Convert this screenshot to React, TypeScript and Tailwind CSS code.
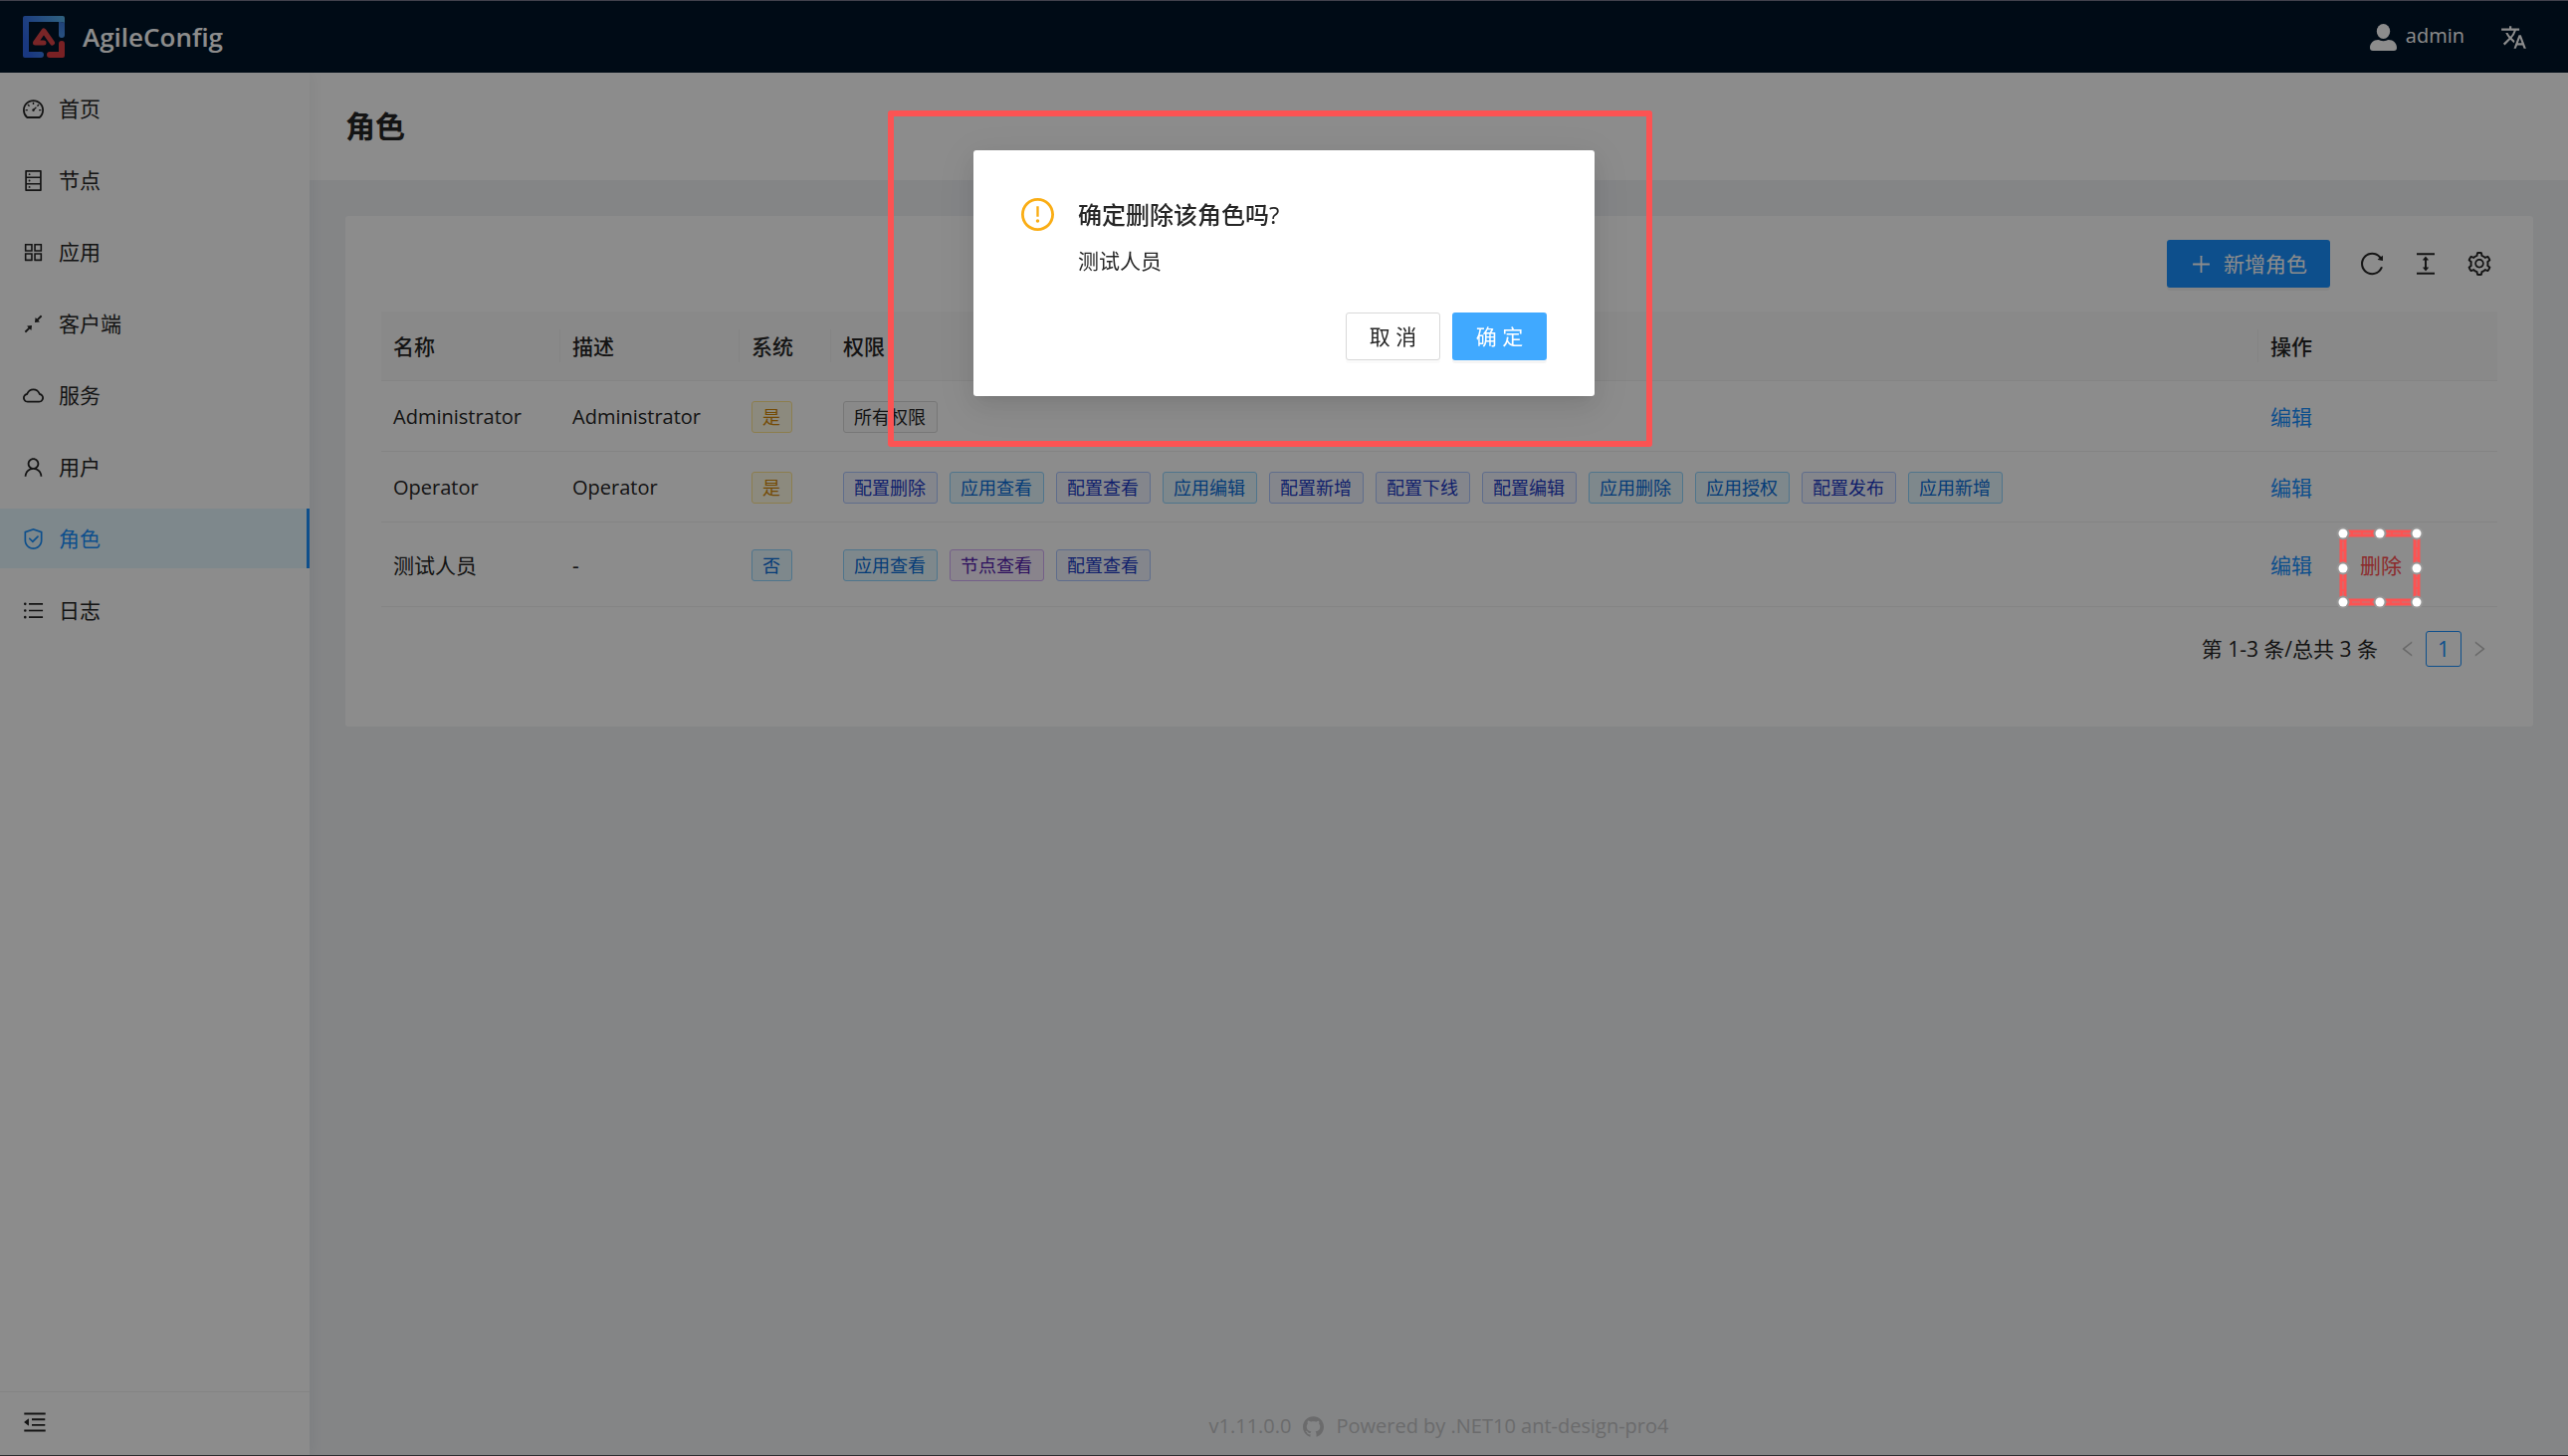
import React from 'react';
import {
  AiFillGithub,
  AiOutlineAppstore,
  AiOutlineCloud,
  AiOutlineColumnHeight,
  AiOutlineDashboard,
  AiOutlineDatabase,
  AiOutlineExclamationCircle,
  AiOutlineLeft,
  AiOutlineMenuFold,
  AiOutlinePlus,
  AiOutlineReload,
  AiOutlineRight,
  AiOutlineSafety,
  AiOutlineSetting,
  AiOutlineShrink,
  AiOutlineUnorderedList,
  AiOutlineUser,
} from 'react-icons/ai';
import { MdTranslate } from 'react-icons/md';
import type { IconType } from 'react-icons';

type TagColor = 'default' | 'gold' | 'blue' | 'geekblue' | 'purple';

interface Role {
  name: string;
  description: string;
  system: boolean;
  functions: string[];
}

// antd crops its glyphs to this box
const antBox = '64 64 896 896';

const tagStyles: Record<TagColor, string> = {
  default: 'bg-[#fafafa] border-[#d9d9d9] text-[#262626]',
  gold: 'bg-[#fffbe6] border-[#ffe58f] text-[#d48806]',
  blue: 'bg-[#e6f7ff] border-[#91d5ff] text-[#096dd9]',
  geekblue: 'bg-[#f0f5ff] border-[#adc6ff] text-[#1d39c4]',
  purple: 'bg-[#f9f0ff] border-[#d3adf7] text-[#531dab]',
};

const menus: { label: string; icon: IconType }[] = [
  { label: '首页', icon: AiOutlineDashboard },
  { label: '节点', icon: AiOutlineDatabase },
  { label: '应用', icon: AiOutlineAppstore },
  { label: '客户端', icon: AiOutlineShrink },
  { label: '服务', icon: AiOutlineCloud },
  { label: '用户', icon: AiOutlineUser },
  { label: '角色', icon: AiOutlineSafety },
  { label: '日志', icon: AiOutlineUnorderedList },
];

const roles: Role[] = [
  { name: 'Administrator', description: 'Administrator', system: true, functions: ['所有权限'] },
  {
    name: 'Operator',
    description: 'Operator',
    system: true,
    functions: [
      '配置删除', '应用查看', '配置查看', '应用编辑', '配置新增', '配置下线',
      '配置编辑', '应用删除', '应用授权', '配置发布', '应用新增',
    ],
  },
  { name: '测试人员', description: '-', system: false, functions: ['应用查看', '节点查看', '配置查看'] },
];

const functionColor = (name: string): TagColor => {
  if (name.startsWith('配置')) return 'geekblue';
  if (name.startsWith('应用')) return 'blue';
  if (name.startsWith('节点')) return 'purple';
  return 'default';
};

function Tag({ color, children }: { color: TagColor; children: React.ReactNode }) {
  return (
    <span className={`inline-block h-8 rounded-[3px] border pl-[10px] pr-[11px] text-lg leading-[30px] whitespace-nowrap ${tagStyles[color]}`}>
      {children}
    </span>
  );
}

function Logo() {
  return (
    <svg width="42" height="42" viewBox="0 0 42 42" fill="none" aria-hidden="true">
      <defs>
        <linearGradient id="logo-blue" x1="0" y1="21" x2="42" y2="6" gradientUnits="userSpaceOnUse">
          <stop stopColor="#2f66ea" />
          <stop offset="1" stopColor="#56b0e8" />
        </linearGradient>
        <linearGradient id="logo-side" x1="39" y1="6" x2="39" y2="22" gradientUnits="userSpaceOnUse">
          <stop stopColor="#3a78dc" />
          <stop offset="1" stopColor="#4a94e8" />
        </linearGradient>
      </defs>
      <path d="M2 0h38a2 2 0 0 1 2 2v5l-4-1H6v30h12a3 3 0 0 1 0 6H2a2 2 0 0 1-2-2V2a2 2 0 0 1 2-2Z" fill="url(#logo-blue)" />
      <path d="M36 6h2l4 1v12a3 3 0 0 1-6 0Z" fill="url(#logo-side)" />
      <path d="M39 25a3 3 0 0 1 3 3v12a2 2 0 0 1-2 2H27a3 3 0 0 1 0-6h9v-8a3 3 0 0 1 3-3Z" fill="#dc3c42" />
      <path d="M21 27h-8.500L21 15l8.500 12" stroke="#dc4448" strokeWidth="5" strokeLinecap="round" strokeLinejoin="round" />
    </svg>
  );
}

function Header() {
  return (
    <header className="flex h-[72px] shrink-0 items-center justify-between bg-[#001529] pr-[41px] pl-[23px] text-white">
      <a href="#" className="flex items-center gap-[18px]">
        <Logo />
        <h1 className="text-[26px] font-semibold">AgileConfig</h1>
      </a>
      <div className="flex items-center gap-9">
        <button className="flex items-center gap-[9px]">
          <svg width="27" height="27" viewBox="0 0 27 27" fill="currentColor" aria-hidden="true">
            <ellipse cx="13.500" cy="7.500" rx="6.700" ry="7.500" />
            <path d="M0 24c0-4.500 3.500-8 8.300-8 1.600 0 2.800 1.300 5.200 1.300s3.600-1.300 5.200-1.300C23.500 16 27 19.500 27 24c0 2-1 3-3 3H3c-2 0-3-1-3-3Z" />
          </svg>
          <span className="pb-0.5 text-xl">admin</span>
        </button>
        <button aria-label="语言">
          <MdTranslate size={27} />
        </button>
      </div>
    </header>
  );
}

function Sidebar() {
  return (
    <aside className="z-10 flex w-[311px] shrink-0 flex-col bg-white shadow-[3px_0_12px_rgba(29,35,41,0.05)]">
      <nav className="flex grow flex-col gap-3 pt-[6px]">
        {menus.map(({ label, icon: Icon }) => (
          <a
            key={label}
            href="#"
            className={
              label === '角色'
                ? 'flex h-[60px] items-center gap-[15px] border-r-3 border-[#1890ff] bg-[#e6f7ff] pl-[23px] text-[#1890ff]'
                : 'flex h-[60px] items-center gap-[15px] pl-[23px]'
            }
          >
            <Icon size={21} viewBox={antBox} />
            {label}
          </a>
        ))}
      </nav>
      <div className="h-16 border-t border-[#f0f0f0] pt-[17px] pl-[23px]">
        <button aria-label="收起菜单">
          <AiOutlineMenuFold size={24} viewBox={antBox} />
        </button>
      </div>
    </aside>
  );
}

function RoleTable() {
  const cell = 'border-b border-[#f0f0f0] pt-0.5 pl-3';

  return (
    <table className="w-full table-fixed border-separate border-spacing-0 text-left">
      <colgroup>
        <col className="w-[180px]" />
        <col className="w-[180px]" />
        <col className="w-[92px]" />
        <col />
        <col className="w-[240px]" />
      </colgroup>
      <thead>
        <tr className="h-[70px]">
          {['名称', '描述', '系统', '权限', '操作'].map((title) => (
            <th key={title} className="group border-b border-[#f0f0f0] bg-[#fafafa] p-0 font-medium">
              <div className="h-[33px] border-r border-[#f0f0f0] pl-3 group-last:border-r-0">{title}</div>
            </th>
          ))}
        </tr>
      </thead>
      <tbody>
        {roles.map((role) => (
          <tr key={role.name} className={role.system ? 'h-[71px] text-xl leading-[34px]' : 'h-[85px]'}>
            <td className={cell}>{role.name}</td>
            <td className={cell}>{role.description}</td>
            <td className={cell}>
              <div className="flex">
                <Tag color={role.system ? 'gold' : 'blue'}>{role.system ? '是' : '否'}</Tag>
              </div>
            </td>
            <td className={cell}>
              <div className="flex gap-3">
                {role.functions.map((name) => (
                  <Tag key={name} color={functionColor(name)}>{name}</Tag>
                ))}
              </div>
            </td>
            <td className={cell}>
              <div className="flex gap-12 text-[21px]">
                <a href="#" className="text-[#1890ff]">编辑</a>
                {!role.system && <a href="#" className="text-[#ff4d4f]">删除</a>}
              </div>
            </td>
          </tr>
        ))}
      </tbody>
    </table>
  );
}

// Selection box with drag handles around the delete link
function SelectionMark() {
  const points = [
    [7, 7], [44, 7], [81, 7],
    [7, 42], [81, 42],
    [7, 76], [44, 76], [81, 76],
  ];
  return (
    <svg className="absolute top-[528px] right-[145px] z-30" width="88" height="84" viewBox="0 0 88 84" fill="none" aria-hidden="true">
      <rect x="7" y="7" width="74" height="69" stroke="#fc5353" strokeWidth="7" />
      <rect x="7" y="7" width="74" height="69" stroke="#c27878" strokeWidth="1" strokeDasharray="8 2" />
      {points.map(([x, y]) => (
        <g key={`${x}-${y}`}>
          <circle cx={x} cy={y} r="6.500" fill="#969696" />
          <circle cx={x} cy={y} r="4.500" fill="#fff" />
        </g>
      ))}
    </svg>
  );
}

function ConfirmModal() {
  return (
    <div className="fixed inset-0 z-20 flex items-start justify-center bg-black/45 pt-[151px]">
      <div className="absolute top-[111px] left-1/2 ml-[-398px] h-[338px] w-[768px] rounded-[3px] border-6 border-[#fc5353]" />
      <div
        role="dialog"
        aria-labelledby="confirm-title"
        className="w-[624px] rounded-[3px] bg-white px-12 pt-12 pb-9 shadow-[0_9px_42px_12px_rgba(0,0,0,0.05),0_9px_24px_rgba(0,0,0,0.08),0_5px_9px_-6px_rgba(0,0,0,0.12)]"
      >
        <div className="flex gap-6">
          <AiOutlineExclamationCircle size={33} viewBox={antBox} className="shrink-0 text-[#faad14]" />
          <div>
            <h3 id="confirm-title" className="text-2xl leading-[34px] font-medium">确定删除该角色吗?</h3>
            <p className="mt-3">测试人员</p>
          </div>
        </div>
        <div className="mt-[35px] flex justify-end gap-3">
          <button className="h-12 w-[95px] rounded-[3px] border border-[#d9d9d9] bg-white shadow-[0_3px_0_rgba(0,0,0,0.02)]">取 消</button>
          <button className="h-12 w-[95px] rounded-[3px] bg-[#40a9ff] text-white shadow-[0_3px_0_rgba(0,0,0,0.04)]">确 定</button>
        </div>
      </div>
    </div>
  );
}

export default function App() {
  return (
    <div className="relative flex min-h-screen flex-col border-t border-b border-t-[#77778a] border-b-[#55555a] bg-[#f0f2f5] font-['Open_Sans','Noto_Sans_CJK_SC',sans-serif] text-[21px] leading-[34px] text-[#262626]">
      <Header />
      <div className="flex grow">
        <Sidebar />
        <div className="flex min-w-0 grow flex-col">
          <div className="flex h-[108px] items-center bg-white px-9">
            <h2 className="text-3xl font-semibold">角色</h2>
          </div>
          <main className="m-9 mr-[35px] rounded-[3px] bg-white px-9 pb-15">
            <div className="flex h-24 items-center justify-end gap-[30px] pr-[6px]">
              <button className="flex h-12 items-center gap-3 rounded-[3px] bg-[#1890ff] pr-[23px] pl-6 text-white shadow-[0_3px_0_rgba(0,0,0,0.04)]">
                <AiOutlinePlus size={21} viewBox={antBox} />
                新增角色
              </button>
              <button aria-label="刷新"><AiOutlineReload size={24} viewBox={antBox} /></button>
              <button aria-label="密度"><AiOutlineColumnHeight size={24} viewBox={antBox} /></button>
              <button aria-label="列设置"><AiOutlineSetting size={24} viewBox={antBox} /></button>
            </div>
            <RoleTable />
            <div className="mt-6 flex h-9 items-center justify-end">
              <span className="mr-3">第 1-3 条/总共 3 条</span>
              <button aria-label="上一页" className="flex size-9 items-center justify-center text-[#bfbfbf]"><AiOutlineLeft size={18} viewBox={antBox} /></button>
              <button className="size-9 rounded-[3px] border border-[#1890ff] font-medium text-[#1890ff]">1</button>
              <button aria-label="下一页" className="flex size-9 items-center justify-center text-[#bfbfbf]"><AiOutlineRight size={18} viewBox={antBox} /></button>
            </div>
          </main>
          <footer className="mt-auto mb-3 flex items-center justify-center gap-3 text-xl leading-[34px] text-[#c3c4c5]">
            <span>v1.11.0.0</span>
            <AiFillGithub size={21} viewBox={antBox} />
            <span>Powered by .NET10 ant-design-pro4</span>
          </footer>
        </div>
      </div>
      <ConfirmModal />
      <SelectionMark />
    </div>
  );
}
